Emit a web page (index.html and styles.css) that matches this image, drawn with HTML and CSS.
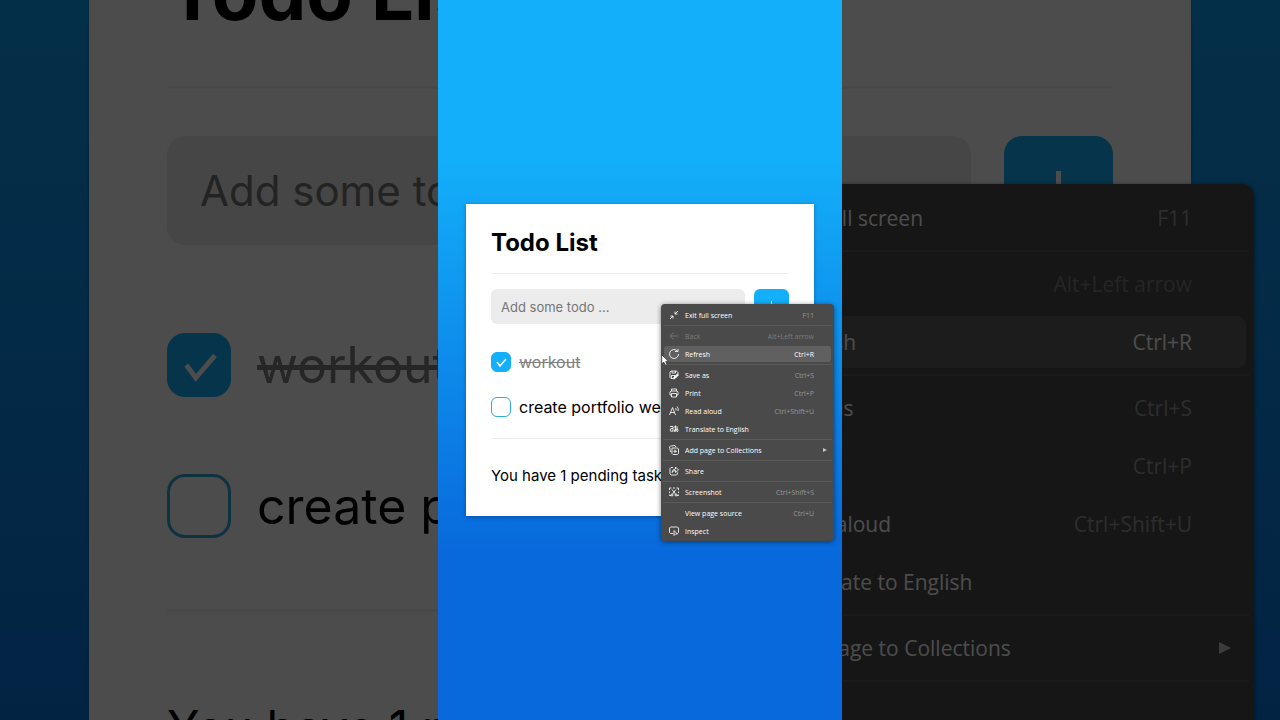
FILE: index.html
```html
<!DOCTYPE html>
<html lang="en">
<head>
  <meta charset="UTF-8" />
  <meta name="viewport" content="width=device-width, initial-scale=1.0" />
  <title>Todo List</title>
  <link rel="stylesheet" href="styles.css">
</head>
<body>

  <!-- menu icons -->
  <svg class="icon-defs" aria-hidden="true">
    <symbol id="i-exit" viewBox="0 0 20 20"><path d="M18 2l-6 6M12 3v5h5M2 18l6-6M3 12h5v5"/></symbol>
    <symbol id="i-back" viewBox="0 0 20 20"><path d="M19 10H2M9 3l-7 7 7 7"/></symbol>
    <symbol id="i-refresh" viewBox="0 0 20 20"><path d="M19 10a9 9 0 1 1-3-6.700M12 5h6V0"/></symbol>
    <symbol id="i-save" viewBox="0 0 20 20"><path d="M8 17H4l-2-2V4l2-2h11l3 3v3M6 2v4h7V2M5 17v-6h7"/><path class="solid" d="M9 18l1-4 7-6 2 2-7 7z"/></symbol>
    <symbol id="i-print" viewBox="0 0 20 20"><path d="M5 6V2h10v4M5 14H2V8l2-2h12l2 2v6h-3M5 11h10v7H5z"/></symbol>
    <symbol id="i-read" viewBox="0 0 20 20"><path d="M1 18L7 3l6 15M3 13h8M13 4q2 2 1 5M16 1q4 4 2 9"/></symbol>
    <symbol id="i-translate" viewBox="0 0 20 20"><path d="M2 5h6v10M8 9q-6-1-6 3 0 4 6 2M10 6h8M13 3q-1 8 1 12M17 8q-2 7-6 7-2-4 4-5 4 0 3 4l-2 2"/></symbol>
    <symbol id="i-collections" viewBox="0 0 20 20"><path d="M5 14l-2-1-2-9 2-2 9-1 2 3M6 6h11l2 2v9l-2 2H8l-2-2zM12 9v7M9 12.500h7"/></symbol>
    <symbol id="i-share" viewBox="0 0 20 20"><path d="M8 3H4L2 5v11l2 2h11l2-2v-3M6 13q1-7 7-7V2l6 6-6 5V9q-4 0-7 4z"/></symbol>
    <symbol id="i-shot" viewBox="0 0 20 20"><path d="M1 6V2h4M8 2h4M15 2h4v4M19 9v3M1 9v3M1 15v2h3M19 15v2h-3M6 5l7 9M14 5l-7 9"/><circle cx="6" cy="16" r="2"/><circle cx="14" cy="16" r="2"/></symbol>
    <symbol id="i-inspect" viewBox="0 0 20 20"><path d="M8 15H3l-2-2V4l2-2h14l2 2v9l-2 2M10 9v10l3-3h4z"/></symbol>
    <symbol id="i-check" viewBox="0 0 20 20"><path d="M6 10l3 4 6-7"/></symbol>
  </svg>

  <div class="stage">

    <!-- enlarged, dimmed copy behind the phone -->
    <div class="backdrop" aria-hidden="true" inert>
      <section class="todo">
        <h2 class="todo-title">Todo List</h2>
        <form class="todo-form">
          <input type="text" class="todo-input" placeholder="Add some todo ..." aria-label="New todo">
          <button type="button" class="todo-add" aria-label="Add todo"></button>
        </form>
        <ul class="todo-list">
          <li>
            <label class="todo-item">
              <input type="checkbox" checked>
              <svg class="tick"><use href="#i-check"/></svg>
              <span>workout</span>
            </label>
          </li>
          <li>
            <label class="todo-item">
              <input type="checkbox">
              <span>create portfolio website</span>
            </label>
          </li>
        </ul>
        <p class="todo-pending">You have 1 pending tasks</p>

        <div class="menu">
          <button class="menu-item"><span>Exit full screen</span><kbd>F11</kbd></button>
          <hr>
          <button class="menu-item" disabled><span>Back</span><kbd>Alt+Left arrow</kbd></button>
          <button class="menu-item active"><span>Refresh</span><kbd>Ctrl+R</kbd></button>
          <hr>
          <button class="menu-item"><span>Save as</span><kbd>Ctrl+S</kbd></button>
          <button class="menu-item"><span>Print</span><kbd>Ctrl+P</kbd></button>
          <button class="menu-item"><span>Read aloud</span><kbd>Ctrl+Shift+U</kbd></button>
          <button class="menu-item"><span>Translate to English</span></button>
          <hr>
          <button class="menu-item submenu"><span>Add page to Collections</span></button>
          <hr>
        </div>
      </section>
    </div>

    <main class="phone">
      <section class="todo">
        <h1 class="todo-title">Todo List</h1>
        <form class="todo-form">
          <input type="text" class="todo-input" placeholder="Add some todo ..." aria-label="New todo">
          <button type="button" class="todo-add" aria-label="Add todo"></button>
        </form>
        <ul class="todo-list">
          <li>
            <label class="todo-item">
              <input type="checkbox" checked>
              <svg class="tick"><use href="#i-check"/></svg>
              <span>workout</span>
            </label>
          </li>
          <li>
            <label class="todo-item">
              <input type="checkbox">
              <span>create portfolio website</span>
            </label>
          </li>
        </ul>
        <p class="todo-pending">You have 1 pending tasks</p>

        <div class="menu">
          <button class="menu-item"><svg><use href="#i-exit"/></svg><span>Exit full screen</span><kbd>F11</kbd></button>
          <hr>
          <button class="menu-item" disabled><svg><use href="#i-back"/></svg><span>Back</span><kbd>Alt+Left arrow</kbd></button>
          <button class="menu-item active"><svg><use href="#i-refresh"/></svg><span>Refresh</span><kbd>Ctrl+R</kbd></button>
          <hr>
          <button class="menu-item"><svg><use href="#i-save"/></svg><span>Save as</span><kbd>Ctrl+S</kbd></button>
          <button class="menu-item"><svg><use href="#i-print"/></svg><span>Print</span><kbd>Ctrl+P</kbd></button>
          <button class="menu-item"><svg><use href="#i-read"/></svg><span>Read aloud</span><kbd>Ctrl+Shift+U</kbd></button>
          <button class="menu-item"><svg><use href="#i-translate"/></svg><span>Translate to English</span></button>
          <hr>
          <button class="menu-item submenu"><svg><use href="#i-collections"/></svg><span>Add page to Collections</span></button>
          <hr>
          <button class="menu-item"><svg><use href="#i-share"/></svg><span>Share</span></button>
          <hr>
          <button class="menu-item"><svg><use href="#i-shot"/></svg><span>Screenshot</span><kbd>Ctrl+Shift+S</kbd></button>
          <hr>
          <button class="menu-item"><span>View page source</span><kbd>Ctrl+U</kbd></button>
          <button class="menu-item"><svg><use href="#i-inspect"/></svg><span>Inspect</span></button>
        </div>

        <svg class="cursor" viewBox="0 0 12 18" aria-hidden="true">
          <path d="M1 1v14l3-3 3 5 2-1-2-5h4z"/>
        </svg>
      </section>
    </main>

  </div>

</body>
</html>
```

FILE: styles.css
```css
* {
  box-sizing: border-box;
  margin: 0;
  padding: 0;
}

body {
  font-family: Inter, 'Open Sans', sans-serif;
  font-optical-sizing: none;
  background: #000;
  color: #000;
}

.icon-defs {
  display: none;
}

.stage {
  position: relative;
  display: flex;
  justify-content: center;
  min-height: 100vh;
  overflow: hidden;
}

/* the same card is drawn at two sizes */
.phone {
  --pad: 25px;
  --pad-top: 24px;
  --pad-bottom: 28px;
  --title: 24px;
  --title-line: 30px;
  --space: 15px;
  --list-start: 15px;
  --rule: 1px;
  --control: 35px;
  --gap: 9px;
  --radius: 6px;
  --input-text: 13px;
  --input-pad: 10px;
  --row: 45px;
  --box: 20px;
  --box-border: 1px;
  --item-text: 16px;
  --item-gap: 8px;
  --list-end: 9px;
  --pending-text: 15px;
  --pending-line: 24px;
  --plus: 12px;
  --plus-line: 1px;
  --menu-top: 100px;
  --menu-right: -20px;
  --menu-width: 173px;
  --menu-text: 7px;
  --menu-row: 18px;
  --menu-rule: 3px;
  --menu-pad: 2px;
  --menu-inset: 1px;
  --menu-start: 21px;
  --menu-end: 17px;
  --arrow: 2px;
  --arrow-end: 4px;
  --menu-radius: 4px;
}

.backdrop {
  --pad: 78px;
  --pad-top: 78px;
  --pad-bottom: 88px;
  --title: 76px;
  --title-line: 94px;
  --space: 47px;
  --list-start: 50px;
  --rule: 3px;
  --control: 109px;
  --gap: 33px;
  --radius: 18px;
  --input-text: 42px;
  --input-pad: 33px;
  --row: 141px;
  --box: 64px;
  --box-border: 3px;
  --item-text: 50px;
  --item-gap: 26px;
  --list-end: 32px;
  --pending-text: 48px;
  --pending-line: 76px;
  --plus: 38px;
  --plus-line: 5px;
  --menu-top: 317px;
  --menu-right: -63px;
  --menu-width: 548px;
  --menu-text: 21px;
  --menu-row: 58px;
  --menu-rule: 8px;
  --menu-pad: 5px;
  --menu-inset: 3px;
  --menu-start: 67px;
  --menu-end: 54px;
  --arrow: 6px;
  --arrow-end: 15px;
  --menu-radius: 12px;
}

.backdrop {
  position: absolute;
  inset: 0;
  display: flex;
  align-items: center;
  padding: 0 89px;
  background: linear-gradient(#13affa -38%, #0869dc 134%);
  overflow: hidden;
}

.backdrop::after {
  content: "";
  position: absolute;
  inset: 0;
  background: rgba(0,0,0,0.7);
  z-index: 3;
}

.phone {
  flex: 0 1 404px;
  display: flex;
  align-items: center;
  padding: 0 28px;
  background: linear-gradient(#13affa 22%, #0869dc 77%);
}

/* keeps the dimming layer under the phone */
.backdrop,
.phone {
  isolation: isolate;
}

.todo {
  position: relative;
  flex: 1;
  min-width: 0;
  padding: var(--pad-top) var(--pad) var(--pad-bottom);
  background: #fff;
  box-shadow: 0 1px 4px rgba(0,0,0,0.3);
}

.todo-title {
  padding-bottom: var(--space);
  border-bottom: var(--rule) solid #ebebeb;
  font-size: var(--title);
  line-height: var(--title-line);
  font-weight: 700;
}

.todo-form {
  display: flex;
  gap: var(--gap);
  margin: var(--space) 0 var(--list-start);
}

.todo-input {
  flex: 1;
  min-width: 0;
  height: var(--control);
  padding: 0 var(--input-pad);
  border: 0;
  border-radius: var(--radius);
  background: #ececec;
  font-family: inherit;
  font-size: var(--input-text);
}

.todo-input::placeholder {
  color: #757575;
}

.todo-add {
  width: var(--control);
  height: var(--control);
  border: 0;
  border-radius: var(--radius);
  background:
    linear-gradient(#fff, #fff) center / var(--plus) var(--plus-line) no-repeat,
    linear-gradient(#fff, #fff) center / var(--plus-line) var(--plus) no-repeat,
    #13affa;
}

.todo-list {
  list-style: none;
  padding-bottom: var(--list-end);
  border-bottom: var(--rule) solid #ebebeb;
}

.backdrop .todo-title,
.backdrop .todo-list {
  border-color: #f2f2f2;
}

.todo-item {
  position: relative;
  display: flex;
  align-items: center;
  gap: var(--item-gap);
  height: var(--row);
  font-size: var(--item-text);
  white-space: nowrap;
}

.todo-item input {
  appearance: none;
  width: var(--box);
  height: var(--box);
  border: var(--box-border) solid #2fabd8;
  border-radius: var(--radius);
}

.todo-item input:checked {
  background: #13affa;
  border-color: #13affa;
}

.todo-item input:checked ~ span {
  color: #808080;
  text-decoration: line-through;
}

.tick {
  position: absolute;
  left: 0;
  width: var(--box);
  height: var(--box);
  fill: none;
  stroke: #fff;
  stroke-width: 1.5;
}

.todo-pending {
  padding-top: var(--pad);
  font-size: var(--pending-text);
  line-height: var(--pending-line);
  white-space: nowrap;
}

/* context menu */
.menu {
  position: absolute;
  top: var(--menu-top);
  right: var(--menu-right);
  z-index: 2;
  width: var(--menu-width);
  padding: var(--menu-pad) var(--menu-pad) var(--menu-inset);
  border-radius: var(--menu-radius);
  background: #4a4a4a;
  box-shadow: 0 1px 5px rgba(0,0,0,0.5);
  font-family: 'Open Sans', 'Noto Sans', sans-serif;
}

.backdrop .menu {
  min-height: 757px;
}

.menu hr {
  height: var(--menu-rule);
  border: 0;
  background: linear-gradient(#5a5a5a, #5a5a5a) center / 100% 1px no-repeat;
}

.backdrop .menu hr {
  background-size: 100% 2px;
}

.menu-item {
  position: relative;
  display: flex;
  align-items: center;
  justify-content: space-between;
  width: 100%;
  height: var(--menu-row);
  padding: 0 var(--menu-end) 0 var(--menu-start);
  border: var(--menu-inset) solid transparent;
  border-radius: var(--menu-radius);
  background: transparent;
  background-clip: padding-box;
  color: #fff;
  font-family: inherit;
  font-size: var(--menu-text);
  white-space: nowrap;
}

.menu-item kbd {
  font-family: inherit;
  color: #989898;
}

.menu-item.active {
  background-color: #606060;
}

.menu-item.active kbd {
  color: #fff;
}

.menu-item:disabled,
.menu-item:disabled kbd {
  color: #7c7c7c;
}

.menu-item svg {
  position: absolute;
  left: 5px;
  width: 10px;
  height: 10px;
  fill: none;
  stroke: currentColor;
  stroke-width: 1.7;
}

.icon-defs .solid {
  fill: currentColor;
}

.submenu::after {
  content: "";
  position: absolute;
  right: var(--arrow-end);
  border: var(--arrow) solid transparent;
  border-left: calc(var(--arrow) * 2) solid #c4c4c4;
  border-right: 0;
}

.cursor {
  position: absolute;
  left: 195px;
  top: 150px;
  z-index: 3;
  width: 8px;
  height: 12px;
  fill: #fff;
  stroke: #333;
  stroke-width: 1;
}
```
